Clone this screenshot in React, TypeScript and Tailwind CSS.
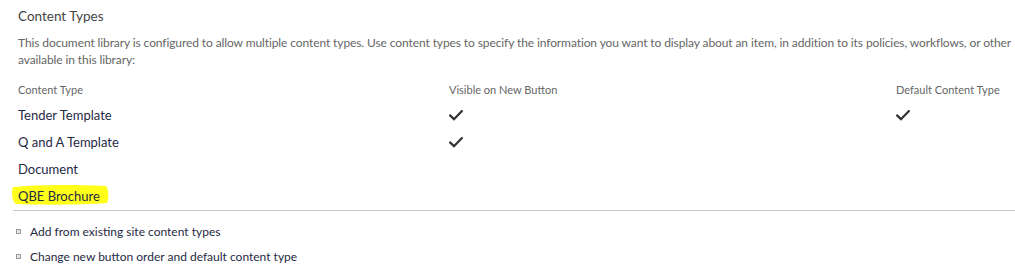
import React from "react";

const ROWS = [
  { name: "Tender Template", visible: true, isDefault: true },
  { name: "Q and A Template", visible: true, isDefault: false },
  { name: "Document", visible: false, isDefault: false },
  { name: "QBE Brochure", visible: false, isDefault: false, marked: true },
];

const LINKS = ["Add from existing site content types", "Change new button order and default content type"];

function Check() {
  return (
    <svg width="14" height="11" viewBox="0 0 14 11" className="block">
      <path d="M1.2 5.6 L5 9.2 L12.8 1.2" fill="none" stroke="#333333" strokeWidth="2.3" strokeLinecap="square" />
    </svg>
  );
}

function Highlight() {
  // yellow marker stroke behind the last row
  return (
    <svg width="100" height="22" viewBox="0 0 100 22" className="absolute left-[-8px] top-[-3px]">
      <path
        d="M3 3 C20 1 60 0 96 2 C99 6 99 15 97 19 C70 21 30 21 6 20 C2 18 1 8 3 3 Z"
        fill="#ffff1a"
      />
    </svg>
  );
}

export default function App() {
  return (
    <div className="w-[1015px] h-[276px] overflow-hidden bg-white font-['Lato',sans-serif]">
      <div className="pt-[6px] pl-[18px]">
        <h2 className="text-[13.5px] leading-[20px] text-[#444444]">Content Types</h2>
        <p className="mt-[8px] text-[12px] tracking-[-0.1px] leading-[17px] text-[#666666]">
          <span className="block whitespace-nowrap">
            This document library is configured to allow multiple content types. Use content types to specify the information you want to display about an item, in addition to its policies, workflows, or other
          </span>
          <span className="block whitespace-nowrap">available in this library:</span>
        </p>

        <div className="mt-[14px] flex text-[11px] leading-[16px] text-[#666666]">
          <div className="w-[431px]">Content Type</div>
          <div className="w-[447px]">Visible on New Button</div>
          <div>Default Content Type</div>
        </div>

        <div className="mt-[4px]">
          {ROWS.map(r => (
            <div key={r.name} className="flex items-center h-[27px] text-[13px] text-[#1f2a44]">
              <div className="w-[431px]">
                <span className="relative inline-block">
                  {r.marked && <Highlight />}
                  <span className="relative">{r.name}</span>
                </span>
              </div>
              <div className="w-[447px]">{r.visible && <Check />}</div>
              <div>{r.isDefault && <Check />}</div>
            </div>
          ))}
        </div>
      </div>

      <div className="ml-[13px] h-px bg-[#c6c6c6]" />

      <div className="pl-[16px] pt-[8px]">
        {LINKS.map(l => (
          <div key={l} className="flex items-center h-[25px] text-[12px] text-[#1f2a44]">
            <span className="w-[5px] h-[5px] border border-[#9a9a9a] bg-[#e4e4e4] mr-[9px]" />
            <span>{l}</span>
          </div>
        ))}
      </div>
    </div>
  );
}
